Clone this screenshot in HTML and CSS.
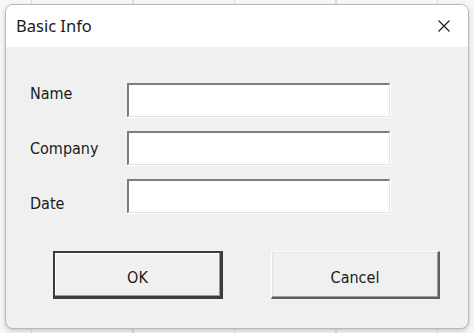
FILE: index.html
```html
<!DOCTYPE html>
<html lang="en">
<head>
<meta charset="utf-8">
<title>Basic Info</title>
<link rel="stylesheet" href="styles.css">
</head>
<body>
<div class="dialog">
  <div class="titlebar">
    <span class="title">Basic Info</span>
    <svg class="close" width="12" height="12" viewBox="0 0 12 12" aria-hidden="true">
      <path d="M0.5 0.5 L11.5 11.5 M11.5 0.5 L0.5 11.5" stroke="#1f1f1f" stroke-width="1.2" fill="none"/>
    </svg>
  </div>
  <div class="content">
    <div class="form">
      <div class="labels">
        <label class="label" for="f-name">Name</label>
        <label class="label" for="f-company">Company</label>
        <label class="label" for="f-date">Date</label>
      </div>
      <div class="fields">
        <input class="field" id="f-name" type="text">
        <input class="field" id="f-company" type="text">
        <input class="field" id="f-date" type="text">
      </div>
    </div>
    <div class="buttons">
      <button class="btn btn-default" type="button">OK</button>
      <button class="btn" type="button">Cancel</button>
    </div>
  </div>
</div>
</body>
</html>
```
FILE: styles.css
```css
html, body {
  margin: 0;
  padding: 0;
}
body {
  width: 474px;
  height: 333px;
  overflow: hidden;
  background-color: #f6f6f6;
  background-image: repeating-linear-gradient(to right, transparent 0, transparent 31px, #dcdcdc 31px, #dcdcdc 32px, transparent 32px, transparent 101.5px);
  background-position: 0 0;
  padding-top: 4px;
  box-sizing: border-box;
}
.dialog {
  margin-left: 5px;
  width: 464px;
  height: 325px;
  box-sizing: border-box;
  border: 1px solid #b9b9b9;
  border-radius: 8px;
  background: #f0f0f0;
  overflow: hidden;
  box-shadow: 0 2px 4px rgba(0,0,0,0.18);
  display: flex;
  flex-direction: column;
}
.titlebar {
  height: 42px;
  background: #ffffff;
  display: flex;
  align-items: center;
  justify-content: space-between;
  padding: 0 18px 0 10px;
  flex-shrink: 0;
}
.title {
  font-family: "Noto Sans", "Open Sans", sans-serif;
  font-size: 16.5px;
  color: #1a1a1a;
  margin-top: -1px;
}
.close {
  display: block;
}
.content {
  flex: 1;
  padding: 36px 0 0 24px;
  font-family: "DejaVu Sans Condensed", "DejaVu Sans", sans-serif;
  font-stretch: condensed;
  font-size: 16px;
  color: #1b1b1b;
}
.form {
  display: flex;
}
.labels {
  width: 97px;
  display: flex;
  flex-direction: column;
  gap: 36px;
  padding-top: 1px;
  line-height: 19px;
}
.fields {
  display: flex;
  flex-direction: column;
  gap: 14px;
}
.field {
  box-sizing: border-box;
  width: 263px;
  height: 34px;
  margin: 0;
  padding: 0;
  background: #ffffff;
  border-style: solid;
  border-width: 2px 1px 1px 2px;
  border-color: #7d7d7d #e3e3e3 #e3e3e3 #7d7d7d;
  box-shadow: 1px 1px 0 #ffffff;
  outline: none;
}
.buttons {
  display: flex;
  gap: 48px;
  margin-top: 38px;
  padding-left: 23px;
}
.btn {
  box-sizing: border-box;
  width: 169px;
  height: 48px;
  margin: 0;
  padding: 5px 0 0 0;
  font-family: "DejaVu Sans Condensed", "DejaVu Sans", sans-serif;
  font-stretch: condensed;
  font-size: 16px;
  color: #1b1b1b;
  background: #f0f0f0;
  border-style: solid;
  border-width: 1px 2px 2px 1px;
  border-color: #fdfdfd #5f5f5f #5f5f5f #fdfdfd;
  box-shadow: inset -1px -1px 0 #a0a0a0, inset 1px 1px 0 #e3e3e3;
}
.btn-default {
  width: 170px;
  border-width: 2px 3px 3px 2px;
  border-color: #3c3c3c;
  box-shadow: inset -1px -1px 0 #9a9a9a, inset 1px 1px 0 #ffffff;
}
```
